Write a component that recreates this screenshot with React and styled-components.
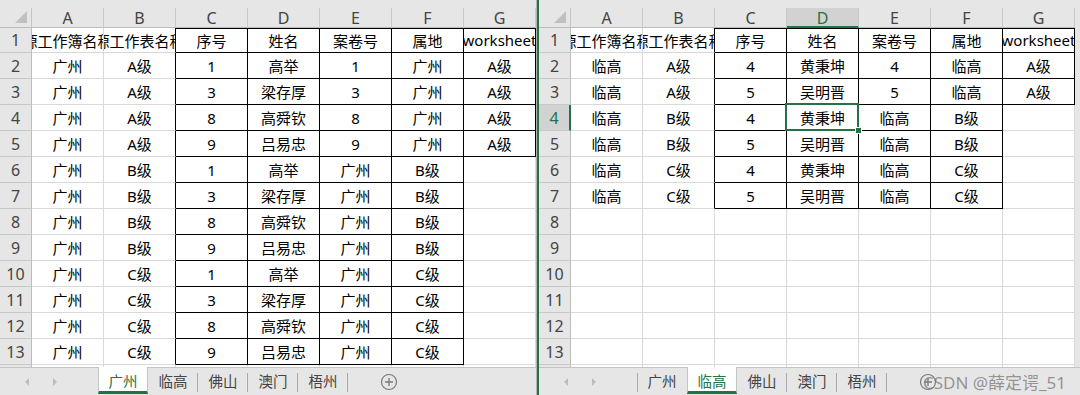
import React from 'react';
import styled, { createGlobalStyle } from 'styled-components';

const GlobalStyle = createGlobalStyle`
  html, body { margin: 0; padding: 0; background: #fff; }
  body {
    width: 1080px; height: 395px; overflow: hidden;
    font-family: "Noto Sans", "Noto Sans CJK SC", sans-serif;
  }
`;

const GREEN = '#217346';

const Screen = styled.div`
  display: flex;
  width: 1080px;
  height: 395px;
`;

const Window = styled.div`
  flex: none;
  width: ${p => p.$w}px;
  height: 395px;
  box-sizing: border-box;
  display: flex;
  flex-direction: column;
  background: #e6e6e6;
  border-left: ${p => (p.$focused ? `2px solid ${GREEN}` : 'none')};
  border-right: ${p => (p.$focused ? 'none' : '1px solid #b4b4b4')};
  position: relative;
  overflow: hidden;
`;

const Sheet = styled.div`
  flex: 1;
  min-height: 0;
  margin-top: 8px;
  overflow: hidden;
  display: grid;
  grid-template-columns: 32px repeat(7, 72px);
  grid-template-rows: 20px 25px repeat(13, 26px);
  align-content: start;
`;

const Corner = styled.div`
  box-sizing: border-box;
  background: #e6e6e6;
  border-right: 1px solid #c4c4c4;
  border-bottom: 1px solid #bcbcbc;
  display: flex;
  align-items: flex-end;
  justify-content: flex-end;
  padding: 0 4px 4px 0;
`;

const Triangle = styled.div`
  width: 0;
  height: 0;
  border-left: 12px solid transparent;
  border-bottom: 12px solid #c0c0c0;
`;

const ColHead = styled.div`
  box-sizing: border-box;
  display: flex;
  align-items: center;
  justify-content: center;
  font-size: 16px;
  padding-top: 1px;
  color: ${p => (p.$sel ? GREEN : '#444')};
  background: ${p => (p.$sel ? '#d2d2d2' : '#e6e6e6')};
  border-right: 1px solid #c8c8c8;
  border-bottom: ${p => (p.$sel ? `2px solid ${GREEN}` : '1px solid #bcbcbc')};
`;

const RowHead = styled.div`
  box-sizing: border-box;
  display: flex;
  align-items: center;
  justify-content: center;
  font-size: 16px;
  color: ${p => (p.$sel ? GREEN : '#444')};
  background: ${p => (p.$sel ? '#d2d2d2' : '#e6e6e6')};
  border-right: ${p => (p.$sel ? `2px solid ${GREEN}` : '1px solid #bcbcbc')};
  border-bottom: 1px solid #c8c8c8;
`;

const Cell = styled.div`
  box-sizing: border-box;
  display: flex;
  align-items: center;
  justify-content: center;
  white-space: nowrap;
  overflow: ${p => (p.$active ? 'visible' : 'hidden')};
  background: #fff;
  color: #000;
  font-size: 15px;
  border-right: 1px solid ${p => (p.$br ? '#000' : '#d9d9d9')};
  border-bottom: 1px solid ${p => (p.$bb ? '#000' : '#d9d9d9')};
  box-shadow: ${p => (p.$bt ? 'inset 0 1px 0 #000' : 'none')};
  position: relative;
  z-index: ${p => (p.$active ? 2 : 'auto')};

  ${p =>
    p.$active &&
    `
    &::after {
      content: '';
      position: absolute;
      left: -2px; top: -2px; right: -1px; bottom: -1px;
      border: 2px solid ${GREEN};
    }
    &::before {
      content: '';
      position: absolute;
      right: -4px; bottom: -4px;
      width: 5px; height: 5px;
      background: ${GREEN};
      border: 1px solid #fff;
      z-index: 3;
    }
  `}
`;

const TabBar = styled.div`
  flex: none;
  height: 28px;
  box-sizing: border-box;
  border-top: 1px solid #c4c4c4;
  background: #e6e6e6;
  display: flex;
  align-items: flex-start;
  position: relative;
`;

const Nav = styled.div`
  flex: none;
  width: 98px;
  height: 26px;
  box-sizing: border-box;
  display: flex;
  align-items: center;
  padding: 2px 0 0 25px;
  gap: 24px;
`;

const Arrow = styled.div`
  width: 0;
  height: 0;
  border-top: 4px solid transparent;
  border-bottom: 4px solid transparent;
  ${p => (p.$dir === 'left' ? 'border-right: 4px solid #bdbdbd;' : 'border-left: 4px solid #bdbdbd;')}
`;

const Tab = styled.div`
  flex: none;
  width: 50px;
  height: ${p => (p.$active ? '27px' : '26px')};
  margin-top: ${p => (p.$active ? '-1px' : '0')};
  box-sizing: border-box;
  display: flex;
  align-items: center;
  justify-content: center;
  padding-top: ${p => (p.$active ? '3px' : '2px')};
  font-size: 14.5px;
  color: ${p => (p.$active ? GREEN : '#444')};
  background: ${p => (p.$active ? '#fff' : 'transparent')};
  border-left: 1px solid ${p => (p.$active ? '#c4c4c4' : 'transparent')};
  border-right: 1px solid ${p => (p.$active ? '#c4c4c4' : 'transparent')};
  border-bottom: 3px solid ${p => (p.$active ? GREEN : 'transparent')};
  position: relative;

  &::before {
    content: '';
    display: ${p => (p.$sepLeft ? 'block' : 'none')};
    position: absolute;
    left: -1px; top: 5px;
    width: 1px; height: 19px;
    background: #a8a8a8;
  }
  &::after {
    content: '';
    display: ${p => (p.$sepRight ? 'block' : 'none')};
    position: absolute;
    right: -1px; top: 5px;
    width: 1px; height: 19px;
    background: #a8a8a8;
  }
`;

const AddButton = styled.div`
  flex: none;
  margin: 5px 0 0 32px;
  width: 18px;
  height: 18px;
  display: flex;
`;

const Watermark = styled.div`
  position: absolute;
  right: 14px;
  top: 1px;
  font-size: 17px;
  color: rgba(120, 120, 120, 0.75);
  font-family: "Noto Sans", "Noto Sans CJK SC", sans-serif;
  white-space: nowrap;
  pointer-events: none;
`;

const COLS = ['A', 'B', 'C', 'D', 'E', 'F', 'G'];
const HEAD = ['源工作簿名称', '源工作表名称', '序号', '姓名', '案卷号', '属地', 'worksheet'];
const names = [['1', '高举'], ['3', '梁存厚'], ['8', '高舜钦'], ['9', '吕易忠']];

const leftRows = [
  HEAD,
  ...names.map(([n, nm]) => ['广州', 'A级', n, nm, n, '广州', 'A级']),
  ...['B级', 'C级'].flatMap(g => names.map(([n, nm]) => ['广州', g, n, nm, '广州', g, ''])),
  ['', '', '', '', '', '', ''],
];

const rn = [['4', '黄秉坤'], ['5', '吴明晋']];
const rightRows = [
  HEAD,
  ...rn.map(([n, nm]) => ['临高', 'A级', n, nm, n, '临高', 'A级']),
  ...['B级', 'C级'].flatMap(g => rn.map(([n, nm]) => ['临高', g, n, nm, '临高', g, ''])),
  ...Array.from({ length: 7 }, () => ['', '', '', '', '', '', '']),
];

const leftBoxed = (r, c) => (r >= 1 && r <= 5 && c >= 2 && c <= 6) || (r >= 6 && r <= 13 && c >= 2 && c <= 5);
const rightBoxed = (r, c) => (r >= 1 && r <= 3 && c >= 2 && c <= 6) || (r >= 4 && r <= 7 && c >= 2 && c <= 5);

const PlusIcon = () => (
  <svg width="18" height="18" viewBox="0 0 18 18">
    <circle cx="9" cy="9" r="7.5" fill="none" stroke="#7a7a7a" strokeWidth="1.2" />
    <path d="M9 5v8M5 9h8" stroke="#7a7a7a" strokeWidth="1.3" />
  </svg>
);

const TABS = ['广州', '临高', '佛山', '澳门', '梧州'];

function Workbook({ width, focused, rows, boxed, activeTab, sel, watermark }) {
  return (
    <Window $w={width} $focused={focused}>
      <Sheet>
        <Corner>
          <Triangle />
        </Corner>
        {COLS.map((c, ci) => (
          <ColHead key={c} $sel={sel && sel.c === ci}>
            {c}
          </ColHead>
        ))}
        {rows.map((row, i) => {
          const r = i + 1;
          return (
            <React.Fragment key={r}>
              <RowHead $sel={sel && sel.r === r}>{r}</RowHead>
              {row.map((v, c) => (
                <Cell
                  key={c}
                  $br={boxed(r, c) || boxed(r, c + 1)}
                  $bb={boxed(r, c) || boxed(r + 1, c)}
                  $bt={r === 1 && boxed(r, c)}
                  $active={sel && sel.r === r && sel.c === c}
                >
                  {v}
                </Cell>
              ))}
            </React.Fragment>
          );
        })}
      </Sheet>
      <TabBar>
        <Nav>
          <Arrow $dir="left" />
          <Arrow $dir="right" />
        </Nav>
        {TABS.map((t, i) => {
          const active = i === activeTab;
          const beforeActive = i === activeTab - 1;
          return (
            <Tab
              key={t}
              $active={active}
              $sepLeft={!active && i === 0 && activeTab !== 0}
              $sepRight={!active && !beforeActive}
            >
              {t}
            </Tab>
          );
        })}
        <AddButton>
          <PlusIcon />
        </AddButton>
        {watermark && <Watermark>{watermark}</Watermark>}
      </TabBar>
    </Window>
  );
}

export default function App() {
  return (
    <>
      <GlobalStyle />
      <Screen>
        <Workbook width={537} rows={leftRows} boxed={leftBoxed} activeTab={0} />
        <Workbook
          width={543}
          focused
          rows={rightRows}
          boxed={rightBoxed}
          activeTab={1}
          sel={{ r: 4, c: 3 }}
          watermark="CSDN @薛定谔_51"
        />
      </Screen>
    </>
  );
}
